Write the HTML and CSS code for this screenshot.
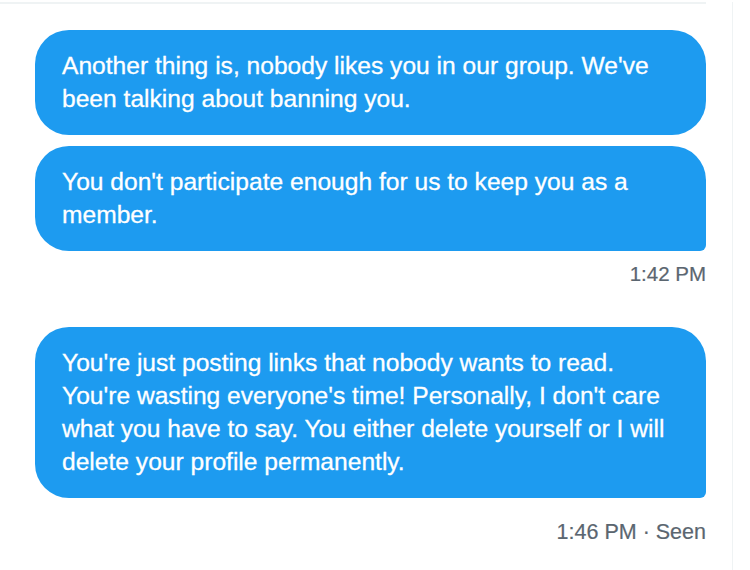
FILE: index.html
```html
<!DOCTYPE html>
<html lang="en">
<head>
<meta charset="utf-8">
<title>Messages</title>
<link rel="stylesheet" href="styles.css">
</head>
<body>
<div class="pane">
  <div class="thread">
    <div class="group">
      <div class="bubble">Another thing is, nobody likes you in our group. We've been talking about banning you.</div>
      <div class="bubble last">You don't participate enough for us to keep you as a member.</div>
      <div class="meta">1:42 PM</div>
    </div>
    <div class="group">
      <div class="bubble last">You're just posting links that nobody wants to read. You're wasting everyone's time! Personally, I don't care what you have to say. You either delete yourself or I will delete your profile permanently.</div>
      <div class="meta seen">1:46 PM · Seen</div>
    </div>
  </div>
</div>
</body>
</html>
```
FILE: styles.css
```css
html, body {
  margin: 0;
  padding: 0;
  background: #ffffff;
}
body {
  width: 750px;
  height: 570px;
  overflow: hidden;
  font-family: "Liberation Sans", Arial, sans-serif;
}
.pane {
  width: 733px;
  height: 570px;
  border-right: 1px solid #eff3f4;
  box-sizing: border-box;
}
.thread {
  width: 706px;
  border-top: 2px solid #eff3f4;
  margin-top: 2px;
  padding: 26px 0 0 35px;
  box-sizing: border-box;
  display: flex;
  flex-direction: column;
  gap: 41px;
}
.group {
  display: flex;
  flex-direction: column;
  align-items: flex-end;
  gap: 11px;
}
.bubble {
  width: 671px;
  box-sizing: border-box;
  background: #1d9bf0;
  color: #ffffff;
  font-size: 24.6px;
  line-height: 33px;
  padding: 19px 27px 20px 27px;
  border-radius: 34px;
  -webkit-text-stroke: 0.3px #ffffff;
}
.bubble.last {
  border-radius: 34px 34px 6px 34px;
}
.meta {
  color: #5b6670;
  font-size: 20.5px;
  line-height: 24px;
  -webkit-text-stroke: 0.2px #5b6670;
}
.meta.seen {
  font-size: 21.5px;
  margin-top: 11px;
}
```
